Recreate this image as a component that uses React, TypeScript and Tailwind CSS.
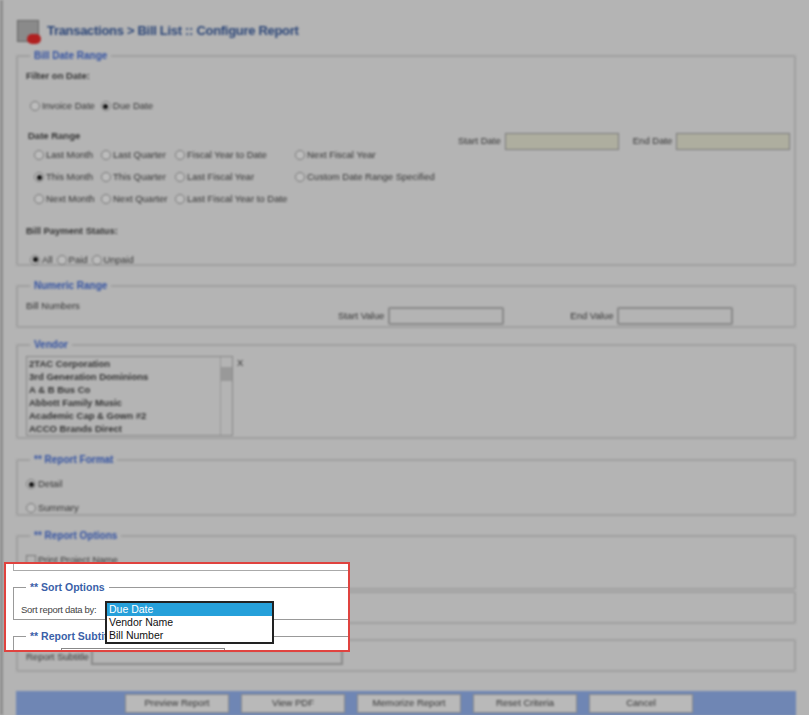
import React from "react";

const F = { fontFamily: '"Liberation Sans", Arial, sans-serif' };

function Radio({ on, label }: { on?: boolean; label: string }) {
  return (
    <span className="inline-flex items-center gap-[2px] whitespace-nowrap">
      <span className="w-[10px] h-[10px] rounded-full border border-[#777] bg-[#bdbdbd] flex items-center justify-center">
        {on && <span className="w-[5px] h-[5px] rounded-full bg-[#111]" />}
      </span>
      <span>{label}</span>
    </span>
  );
}

function FS({ title, className, children }: { title: string; className?: string; children?: React.ReactNode }) {
  return (
    <fieldset className={"mx-[13px] border-2 border-[#a0a0a0] rounded-[2px] px-[8px] " + (className || "")}>
      <legend className="px-[4px] ml-[4px] text-[#3352a2] font-bold text-[10px]">{title}</legend>
      {children}
    </fieldset>
  );
}

export default function App() {
  return (
    <div style={F} className="relative w-[809px] h-[715px] overflow-hidden bg-[#b4b4b4] text-[#333] text-[9.5px]">
      <div className="blur-[1px] border-l-[3px] border-[#8e8e8e] h-full">
        <div className="flex items-center gap-[8px] pl-[14px] pt-[14px] h-[48px]">
          <div className="w-[22px] h-[22px] relative bg-[#8a8a8a] border border-[#666]">
            <div className="absolute right-[-3px] bottom-[-3px] w-[14px] h-[10px] rounded-full bg-[#b02020]" />
          </div>
          <span className="text-[13px] font-bold text-[#2c4678] tracking-[-0.3px]">Transactions &gt; Bill List :: Configure Report</span>
        </div>
        <FS title="Bill Date Range" className="h-[218px] relative">
          <div className="mt-[6px] font-bold">Filter on Date:</div>
          <div className="mt-[16px] flex gap-[6px] ml-[4px]"><Radio label="Invoice Date" /><Radio on label="Due Date" /></div>
          <div className="mt-[15px] ml-[2px] font-bold">Date Range</div>
          <div className="grid grid-cols-[67px_74px_120px_150px] gap-y-[8px] ml-[8px] mt-[5px]">
            <Radio label="Last Month" /><Radio label="Last Quarter" /><Radio label="Fiscal Year to Date" /><Radio label="Next Fiscal Year" />
            <Radio on label="This Month" /><Radio label="This Quarter" /><Radio label="Last Fiscal Year" /><Radio label="Custom Date Range Specified" />
            <Radio label="Next Month" /><Radio label="Next Quarter" /><Radio label="Last Fiscal Year to Date" /><span />
          </div>
          <div className="mt-[17px] font-bold">Bill Payment Status:</div>
          <div className="mt-[15px] flex gap-[4px] ml-[4px]"><Radio on label="All" /><Radio label="Paid" /><Radio label="Unpaid" /></div>
          <div className="absolute left-[440px] top-[70px] flex items-center gap-[4px]">
            <span>Start Date</span><span className="w-[114px] h-[17px] bg-[#aeae9f] border border-[#7b7b7b]" />
            <span className="ml-[10px]">End Date</span><span className="w-[114px] h-[17px] bg-[#aeae9f] border border-[#7b7b7b]" />
          </div>
        </FS>
        <FS title="Numeric Range" className="mt-[12px] h-[50px] relative">
          <div className="mt-[6px]">Bill Numbers</div>
          <div className="absolute left-[320px] top-[14px] flex items-center gap-[4px]">
            <span>Start Value</span><span className="w-[116px] h-[18px] border-2 border-[#8a8a8a] rounded-[2px]" />
            <span className="ml-[62px]">End Value</span><span className="w-[116px] h-[18px] border-2 border-[#8a8a8a] rounded-[2px]" />
          </div>
        </FS>
        <FS title="Vendor" className="mt-[9px] h-[102px]">
          <div className="flex mt-[4px]">
            <div className="w-[207px] border border-[#888] flex leading-[13px] font-bold">
              <div className="flex-1 pl-[2px]">
                <div>2TAC Corporation</div><div>3rd Generation Dominions</div><div>A &amp; B Bus Co</div>
                <div>Abbott Family Music</div><div>Academic Cap &amp; Gown #2</div><div>ACCO Brands Direct</div>
              </div>
              <div className="w-[12px] border-l border-[#999] flex flex-col">
                <div className="h-[10px]" /><div className="h-[14px] bg-[#999]" />
              </div>
            </div>
            <span className="ml-[4px]">X</span>
          </div>
        </FS>
        <FS title="** Report Format" className="mt-[13px] h-[64px]">
          <div className="mt-[10px] flex flex-col gap-[10px]"><Radio on label="Detail" /><Radio label="Summary" /></div>
        </FS>
        <FS title="** Report Options" className="mt-[12px] h-[62px]">
          <div className="mt-[10px] flex items-center gap-[2px]"><span className="w-[10px] h-[10px] border border-[#777]" />Print Project Name</div>
        </FS>
        <FS title="** Sort Options" className="mt-[-6px] h-[40px]" />
        <FS title="** Report Subtitle" className="mt-[8px] h-[40px]">
          <div className="flex items-center gap-[2px] mt-[2px]">Report Subtitle<span className="w-[252px] h-[16px] border-2 border-[#8a8a8a]" /></div>
        </FS>
        <div className="mx-[13px] mt-[19px] h-[25px] bg-[#6f86b4] flex items-center pl-[109px] gap-[12px]">
          {["Preview Report", "View PDF", "Memorize Report", "Reset Criteria", "Cancel"].map((b) => (
            <span key={b} className="w-[104px] h-[19px] bg-[#b9b9b9] border border-[#888] flex items-center justify-center">{b}</span>
          ))}
        </div>
      </div>

      <div className="absolute left-[4px] top-[562px] w-[346px] h-[90px] border-2 border-[#e0433f] bg-white overflow-hidden text-[10px] text-[#333]">
        <div className="absolute left-[7px] top-[-10px] w-[400px] h-[17px] border-l border-b border-[#aaa]" />
        <div className="absolute left-[7px] top-[23px] w-[400px] h-[33px] border border-[#999] border-r-0" />
        <span className="absolute left-[20px] top-[16px] px-[4px] bg-white text-[#3a5fa8] font-bold text-[10.5px]">** Sort Options</span>
        <span className="absolute left-[15px] top-[39px] text-[#444] text-[9.5px] tracking-[-0.3px]">Sort report data by:</span>
        <div className="absolute left-[7px] top-[72px] w-[400px] h-[33px] border border-[#999] border-r-0" />
        <span className="absolute left-[20px] top-[65px] px-[4px] bg-white text-[#3a5fa8] font-bold text-[10.5px]">** Report Subtitle</span>
        <div className="absolute left-[55px] top-[84px] w-[164px] h-[10px] border border-[#888]" />
        <div className="absolute left-[99px] top-[37px] w-[169px] h-[43px] border-2 border-[#222] bg-white text-[10.5px] text-[#111] leading-[13px]">
          <div className="bg-[#26a0da] text-white pl-[2px]">Due Date</div>
          <div className="pl-[2px]">Vendor Name</div>
          <div className="pl-[2px]">Bill Number</div>
        </div>
      </div>
    </div>
  );
}
